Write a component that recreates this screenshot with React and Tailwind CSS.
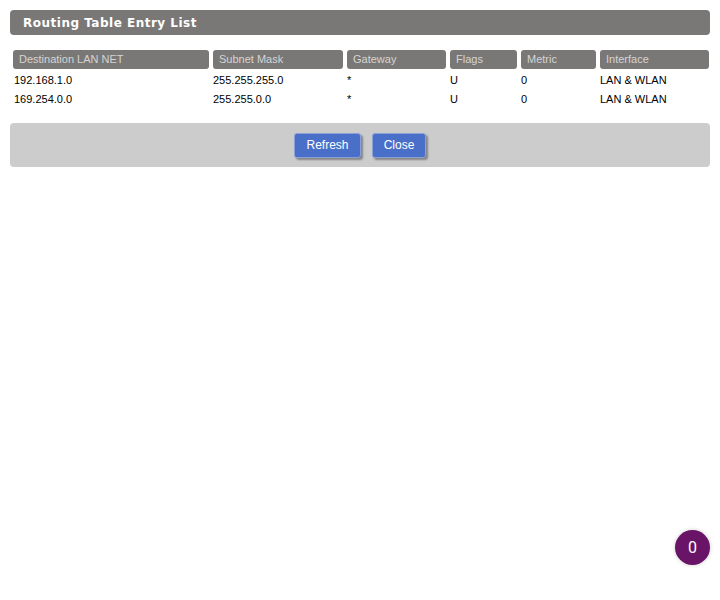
import React from 'react';

const rows = [
  { net: '192.168.1.0', mask: '255.255.255.0', gw: '*', flags: 'U', metric: '0', iface: 'LAN & WLAN' },
  { net: '169.254.0.0', mask: '255.255.0.0', gw: '*', flags: 'U', metric: '0', iface: 'LAN & WLAN' },
];

const headers = ['Destination LAN NET', 'Subnet Mask', 'Gateway', 'Flags', 'Metric', 'Interface'];

export default function App() {
  return (
    <div className="w-[720px] h-[600px] bg-white relative font-['Liberation_Sans',Arial,sans-serif] text-[11px] text-black">
      <div className="pt-[10px] px-[10px]">
        {/* Title */}
        <div className="h-[25px] bg-[#7a7876] rounded-[4px] flex items-center px-[13px]">
          <span className="text-white font-bold text-[12px] tracking-[0.5px] font-['DejaVu_Sans',sans-serif]">Routing Table Entry List</span>
        </div>

        {/* Routing table */}
        <div className="mt-[15px] ml-[3px] grid grid-cols-[196px_130px_99px_67px_75px_109px] gap-x-[4px]">
          {headers.map((h) => (
            <div key={h} className="h-[19px] bg-[#7a7876] rounded-[3px] text-[#d4d4d4] pl-[6px] flex items-center">
              {h}
            </div>
          ))}
          <div className="col-span-6 h-[2px]" />
          {rows.map((r) => (
            <React.Fragment key={r.net}>
              <div className="h-[19px] flex items-center pl-[1px]">{r.net}</div>
              <div className="h-[19px] flex items-center">{r.mask}</div>
              <div className="h-[19px] flex items-center">{r.gw}</div>
              <div className="h-[19px] flex items-center">{r.flags}</div>
              <div className="h-[19px] flex items-center">{r.metric}</div>
              <div className="h-[19px] flex items-center">{r.iface}</div>
            </React.Fragment>
          ))}
        </div>

        {/* Buttons */}
        <div className="mt-[14px] h-[44px] bg-[#cccccc] rounded-[4px] flex items-center justify-center gap-[11px]">
          <button className="w-[67px] h-[25px] bg-[#4a6fc9] text-white text-[12px] rounded-[3px] border border-[#8aa0d8] shadow-[2px_2px_2px_rgba(0,0,0,0.35)]">
            Refresh
          </button>
          <button className="w-[54px] h-[25px] bg-[#4a6fc9] text-white text-[12px] rounded-[3px] border border-[#8aa0d8] shadow-[2px_2px_2px_rgba(0,0,0,0.35)]">
            Close
          </button>
        </div>
      </div>

      {/* Badge */}
      <div className="absolute left-[675px] top-[530px] w-[35px] h-[35px] rounded-full bg-[#6a1468] text-white text-[16px] flex items-center justify-center font-['Roboto',sans-serif] shadow-[0_0_4px_rgba(0,0,0,0.2)]">
        0
      </div>
    </div>
  );
}
